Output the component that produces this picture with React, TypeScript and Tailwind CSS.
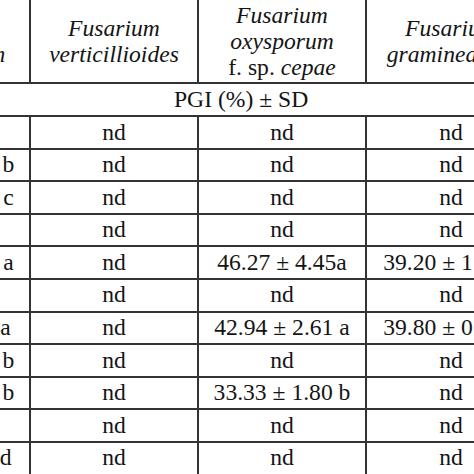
import React from 'react';

const serif = { fontFamily: '"Liberation Serif", "Times New Roman", serif' };

// col 0 sits mostly off-canvas on the left, col 3 runs past the right edge
const data: string[][] = [
    ['nd', 'nd', 'nd', 'nd'],
    ['65.12 ± 2.34 b', 'nd', 'nd', 'nd'],
    ['65.12 ± 2.34 c', 'nd', 'nd', 'nd'],
    ['nd', 'nd', 'nd', 'nd'],
    ['65.12 ± 2.34 a', 'nd', '46.27 ± 4.45a', '39.20 ± 1.52 a'],
    ['nd', 'nd', 'nd', 'nd'],
    ['65.12 ± 2.34a', 'nd', '42.94 ± 2.61 a', '39.80 ± 0.91 a'],
    ['65.12 ± 2.34 b', 'nd', 'nd', 'nd'],
    ['65.12 ± 2.34 b', 'nd', '33.33 ± 1.80 b', 'nd'],
    ['nd', 'nd', 'nd', 'nd'],
    ['65.12 ± 2.34d', 'nd', 'nd', 'nd'],
];

function HeadCell({ children, last }: { children: React.ReactNode; last?: boolean }) {
    return (
        <div className={`w-[168px] shrink-0 h-full flex items-center justify-center text-center leading-[26px] italic ${last ? '' : 'border-r-2 border-[#333]'}`}>
            <div>{children}</div>
        </div>
    );
}

export default function App() {
    return (
        <div className="w-[474px] h-[474px] overflow-hidden bg-white text-[#141414] text-[23.6px]" style={serif}>
            <div className="ml-[-137px] w-[700px]">
                {/* Header */}
                <div className="flex h-[84px] border-b-2 border-[#333]">
                    <HeadCell>Fusarium<br />proliferatum</HeadCell>
                    <HeadCell>Fusarium<br />verticillioides</HeadCell>
                    <HeadCell>
                        Fusarium<br />oxysporum<br /><span className="not-italic">f. sp. </span>cepae
                    </HeadCell>
                    <HeadCell last>Fusarium<br />graminearum</HeadCell>
                </div>

                {/* PGI row */}
                <div className="h-[33px] border-b-2 border-[#333] flex items-center pl-[311px] leading-none">
                    PGI (%) ± SD
                </div>

                {/* Data rows */}
                {data.map((row, i) => (
                    <div key={i} className="flex h-[32.6px] border-b-2 border-[#333]">
                        {row.map((v, j) => (
                            <div
                                key={j}
                                className={`w-[168px] shrink-0 flex items-center justify-center whitespace-nowrap leading-none ${j < 3 ? 'border-r-2 border-[#333]' : ''}`}
                            >
                                {v}
                            </div>
                        ))}
                    </div>
                ))}
            </div>
        </div>
    );
}
